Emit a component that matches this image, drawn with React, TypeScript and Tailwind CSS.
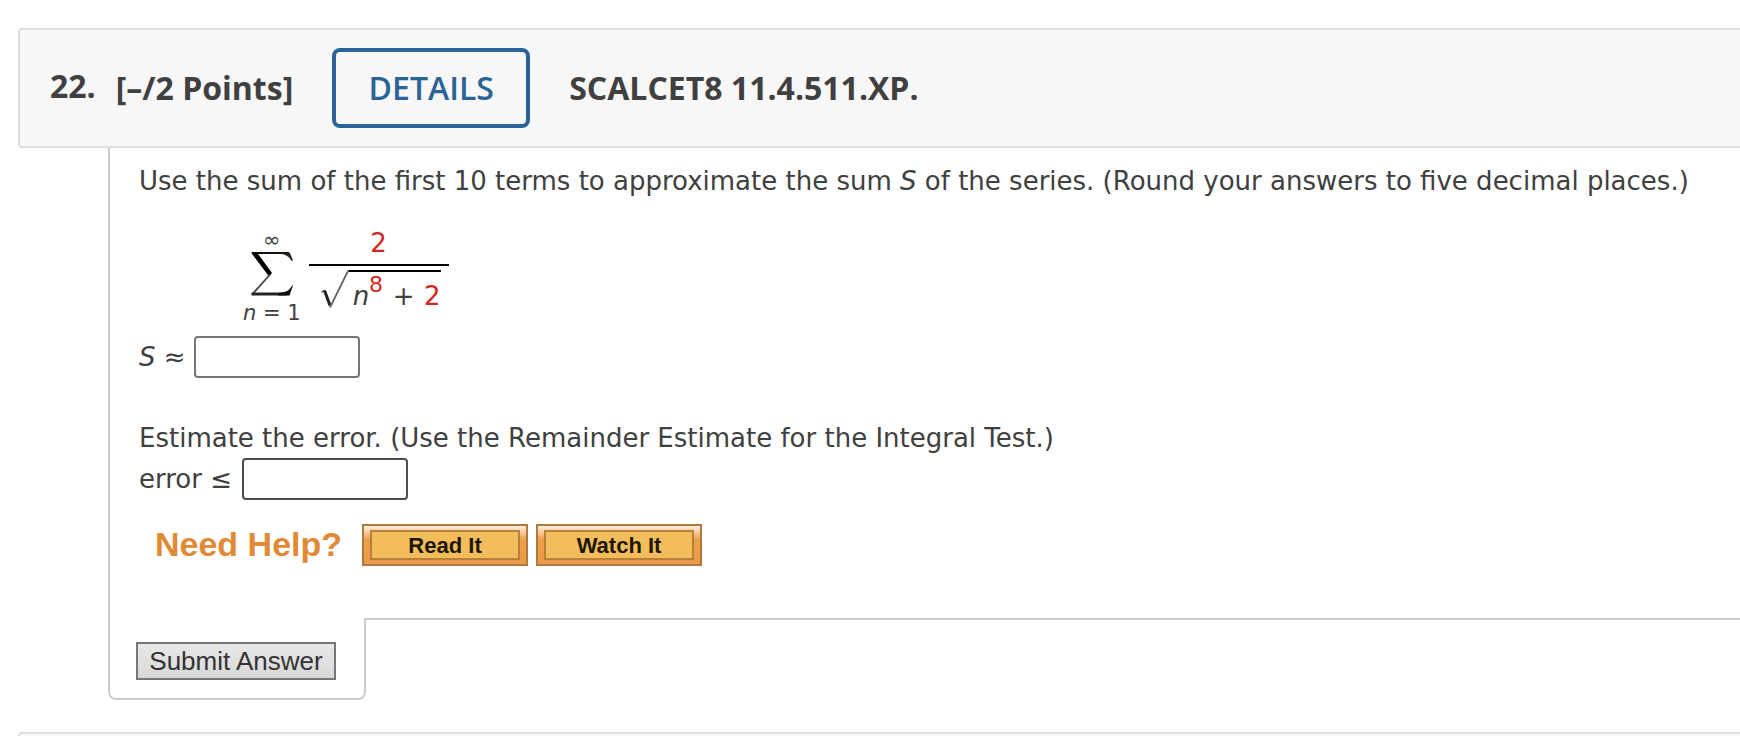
import type { ReactNode } from "react";

function Sigma() {
  return (
    <svg viewBox="0 0 42 44" className="h-11 w-[42px]" fill="none">
      <path d="M1 1H38" stroke="#111" strokeWidth="2" />
      <path d="M30 1H39L42 8.500L40.500 9C38.500 5 36 3 30 2Z" fill="#222" />
      <path d="M0 0.500H6L21 21L18 24.500Z" fill="#000" />
      <path d="M19.500 22L2 41.500" stroke="#444" strokeWidth="1.800" />
      <path d="M0.500 42H36" stroke="#222" strokeWidth="3" />
      <path d="M27 41C35 40.500 38.500 38.500 41 33.500H42L38.500 43.500H27Z" fill="#111" />
    </svg>
  );
}

function Radical() {
  return (
    <svg viewBox="0 0 28 38" className="h-[38px] w-7" fill="none">
      <path d="M0.500 22L4 20.500" stroke="#555" strokeWidth="1.500" />
      <path d="M3.500 20.500L9 35.500" stroke="#222" strokeWidth="3" />
      <path d="M9 37.500L27 1H28" stroke="#666" strokeWidth="1.800" />
    </svg>
  );
}

function HelpButton({ children }: { children: ReactNode }) {
  return (
    <button className="h-[42px] w-[166px] border-2 border-[#b07a3c] bg-linear-to-b from-[#fdeedd] via-[#ee9f4c] via-35% to-[#ea9a48] px-1.5 py-1">
      <span className="flex h-[30px] items-center justify-center border-2 border-[#b8813a] bg-[#f3bd5c] pt-0.5 text-[22px] font-bold text-[#1d1604]">
        {children}
      </span>
    </button>
  );
}

function App() {
  return (
    <main className="overflow-hidden bg-white pt-7 pl-[18px] font-['DejaVu_Sans',Verdana,sans-serif] text-[26px] leading-10 text-[#404040]">
      <header className="flex h-[120px] items-center rounded-l-sm border-2 border-r-0 border-[#dedede] bg-[#f7f7f7] pl-[30px] font-['Open_Sans',sans-serif] text-[32px] font-bold">
        <span className="pb-1">22.</span>
        <span className="ml-5">[–/2 Points]</span>
        <button className="ml-[39px] h-20 w-[198px] rounded-lg border-4 border-[#2a6496] font-semibold text-[#2a6496]">
          DETAILS
        </button>
        <h1 className="ml-[39px]">SCALCET8 11.4.511.XP.</h1>
      </header>

      <div className="ml-[90px]">
        <section className="border-l-2 border-[#ccc] pt-[13px] pb-[52px] pl-[29px]">
          <p className="whitespace-nowrap">
            Use the sum of the first 10 terms to approximate the sum <i>S</i> of the series. (Round your answers to five decimal places.)
          </p>

          <div className="mt-6 ml-[104px] flex h-[100px] items-start gap-2">
            <div className="flex flex-col items-center pt-[3px] text-[21px] leading-6">
              <span>∞</span>
              <Sigma />
              <span className="mt-[5px]">
                <i>n</i> = 1
              </span>
            </div>
            <div className="w-[140px]">
              <div className="mb-[3px] text-center leading-9 text-[#d1281c]">2</div>
              <div className="flex border-t-2 border-black pt-1 pl-3">
                <Radical />
                <div className="flex h-11 w-[92px] items-baseline justify-between border-t-2 border-black pl-1 leading-12">
                  <span>
                    <i>n</i>
                    <sup className="relative -top-[13px] align-baseline text-[22px] leading-none text-[#d1281c]">8</sup>
                  </span>
                  <span>+</span>
                  <span className="text-[#d1281c]">2</span>
                </div>
              </div>
            </div>
          </div>

          <div className="mt-[11px] flex items-center gap-2">
            <label htmlFor="sum">
              <i>S</i> ≈
            </label>
            <input id="sum" type="text" className="h-[42px] w-[166px] rounded-sm border-2 border-[#767676] bg-white px-2" />
          </div>

          <p className="mt-10">Estimate the error. (Use the Remainder Estimate for the Integral Test.)</p>
          <div className="flex items-center gap-2.5">
            <label htmlFor="error">error ≤</label>
            <input id="error" type="text" className="h-[42px] w-[166px] rounded-sm border-2 border-[#4c4c4c] bg-white px-2" />
          </div>

          <div className="mt-6 ml-4 flex items-center gap-2 font-['Liberation_Sans',Arial,sans-serif]">
            <span className="mr-3 pb-0.5 text-[34px] font-bold text-[#e08a35]">Need Help?</span>
            <HelpButton>Read It</HelpButton>
            <HelpButton>Watch It</HelpButton>
          </div>
        </section>

        {/* submit tab hangs below the question box */}
        <div className="flex">
          <div className="h-[82px] w-[258px] rounded-b-lg border-2 border-t-0 border-[#ccc] pt-6 pl-[26px]">
            <button className="flex h-[38px] w-[200px] items-center justify-center border-2 border-[#767676] bg-linear-to-b from-[#e8e8e8] to-[#d8d8d8] font-['Liberation_Sans',Arial,sans-serif] whitespace-nowrap text-[#333]">
              Submit Answer
            </button>
          </div>
          <div className="flex-1 border-t-2 border-[#ccc]" />
        </div>
      </div>

      {/* top edge of the next question */}
      <div className="mt-8 h-1 rounded-tl-sm border-t-2 border-l-2 border-[#dedede] bg-[#f7f7f7]" />
    </main>
  );
}

export default App;
